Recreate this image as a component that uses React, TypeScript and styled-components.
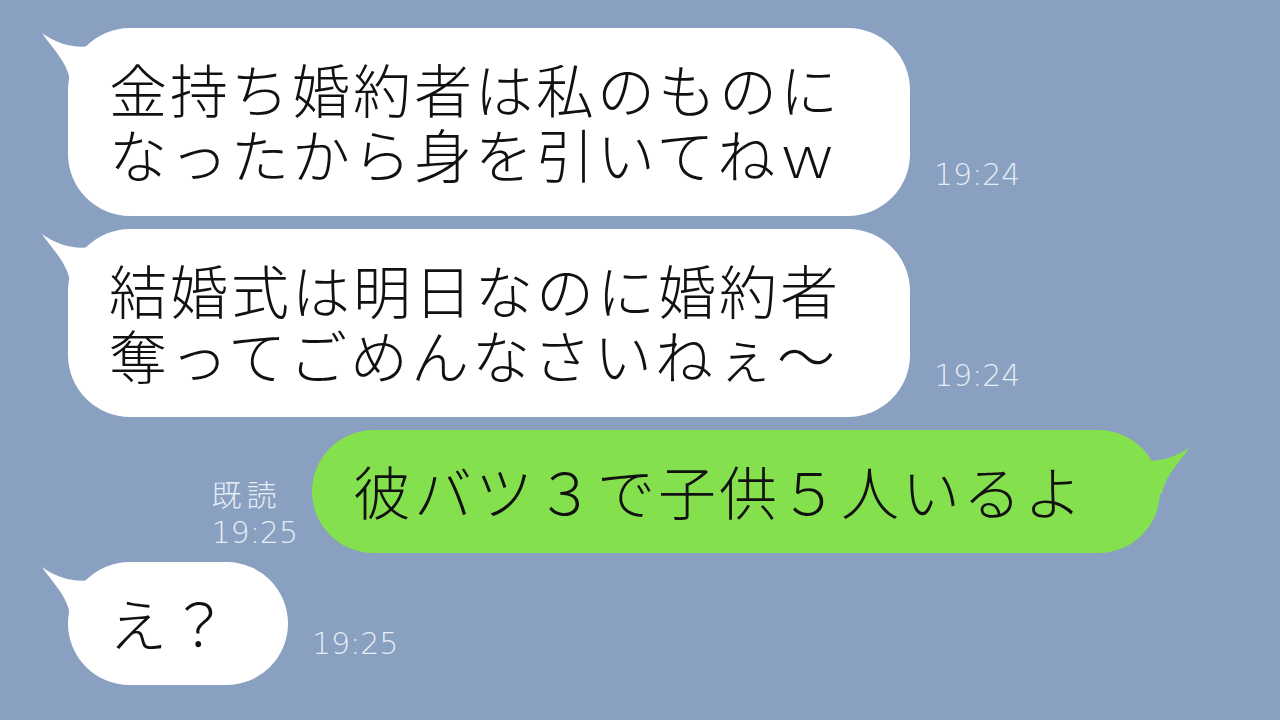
import styled, { createGlobalStyle } from 'styled-components';

const GlobalStyle = createGlobalStyle`
  body {
    margin: 0;
    background: #8aa0c0;
  }
`;

const Screen = styled.div`
  width: 1280px;
  height: 720px;
  box-sizing: border-box;
  padding-top: 28px;
  display: flex;
  flex-direction: column;
  gap: 13px;
  background: #8aa0c0;
  overflow: hidden;
`;

const Row = styled.div<{ $mine?: boolean; $pull?: number }>`
  display: flex;
  align-items: flex-end;
  justify-content: ${p => (p.$mine ? 'flex-end' : 'flex-start')};
  padding: ${p => (p.$mine ? '0 120px 0 0' : '0 0 0 68px')};
  gap: ${p => (p.$mine ? '14px' : '24px')};
  margin-top: ${p => p.$pull ?? 0}px;
`;

const Bubble = styled.div<{ $mine?: boolean; $width: number }>`
  position: relative;
  box-sizing: border-box;
  width: ${p => p.$width}px;
  padding: 28px 0 30px 41px;
  border-radius: 62px;
  background: ${p => (p.$mine ? '#85e04e' : '#ffffff')};
  color: #111;
  font-family: 'Noto Sans CJK JP', 'Noto Sans', sans-serif;
  font-size: 58px;
  font-weight: 300;
  letter-spacing: 3px;
  line-height: 65px;
  white-space: nowrap;
`;

const Line = styled.div``;

const Tail = styled.svg<{ $mine?: boolean }>`
  position: absolute;
  width: 60px;
  height: 64px;
  ${p => (p.$mine ? 'right: -32px; top: 12px; transform: scaleX(-1);' : 'left: -28px; top: 0;')}
`;

const Time = styled.div<{ $lift?: number }>`
  margin-bottom: ${p => p.$lift ?? 26}px;
  font-family: 'DejaVu Sans', sans-serif;
  font-weight: 200;
  font-size: 30px;
  line-height: 30px;
  color: rgba(240, 245, 252, 0.92);
`;

const ReadMark = styled.div`
  display: flex;
  flex-direction: column;
  align-items: flex-start;
  gap: 10px;
  margin-bottom: 5px;
`;

const ReadLabel = styled.div`
  font-family: 'Noto Sans CJK JP', sans-serif;
  font-weight: 300;
  font-size: 30px;
  line-height: 30px;
  letter-spacing: 5px;
  color: rgba(240, 245, 252, 0.92);
`;

const BubbleTail = ({ mine }: { mine?: boolean }) => (
  <Tail $mine={mine} viewBox="0 0 60 64">
    <path
      d="M2 5 C 12 20, 26 32, 30 52 L 60 52 L 60 16 C 40 22, 20 18, 2 5 Z"
      fill={mine ? '#85e04e' : '#ffffff'}
    />
  </Tail>
);

type Msg = { lines: string[]; width: number; time: string };

const incoming: Msg[] = [
  { lines: ['金持ち婚約者は私のものに', 'なったから身を引いてねｗ'], width: 842, time: '19:24' },
  { lines: ['結婚式は明日なのに婚約者', '奪ってごめんなさいねぇ～'], width: 842, time: '19:24' },
];

export default function App() {
  return (
    <>
      <GlobalStyle />
      <Screen>
        {incoming.map((m, i) => (
          <Row key={i}>
            <Bubble $width={m.width}>
              <BubbleTail />
              {m.lines.map(l => (
                <Line key={l}>{l}</Line>
              ))}
            </Bubble>
            <Time>{m.time}</Time>
          </Row>
        ))}
        <Row $mine>
          <ReadMark>
            <ReadLabel>既読</ReadLabel>
            <Time $lift={0}>19:25</Time>
          </ReadMark>
          <Bubble $mine $width={848}>
            <BubbleTail mine />
            <Line>彼バツ３で子供５人いるよ</Line>
          </Bubble>
        </Row>
        <Row $pull={-4}>
          <Bubble $width={220}>
            <BubbleTail />
            <Line>え？</Line>
          </Bubble>
          <Time>19:25</Time>
        </Row>
      </Screen>
    </>
  );
}
